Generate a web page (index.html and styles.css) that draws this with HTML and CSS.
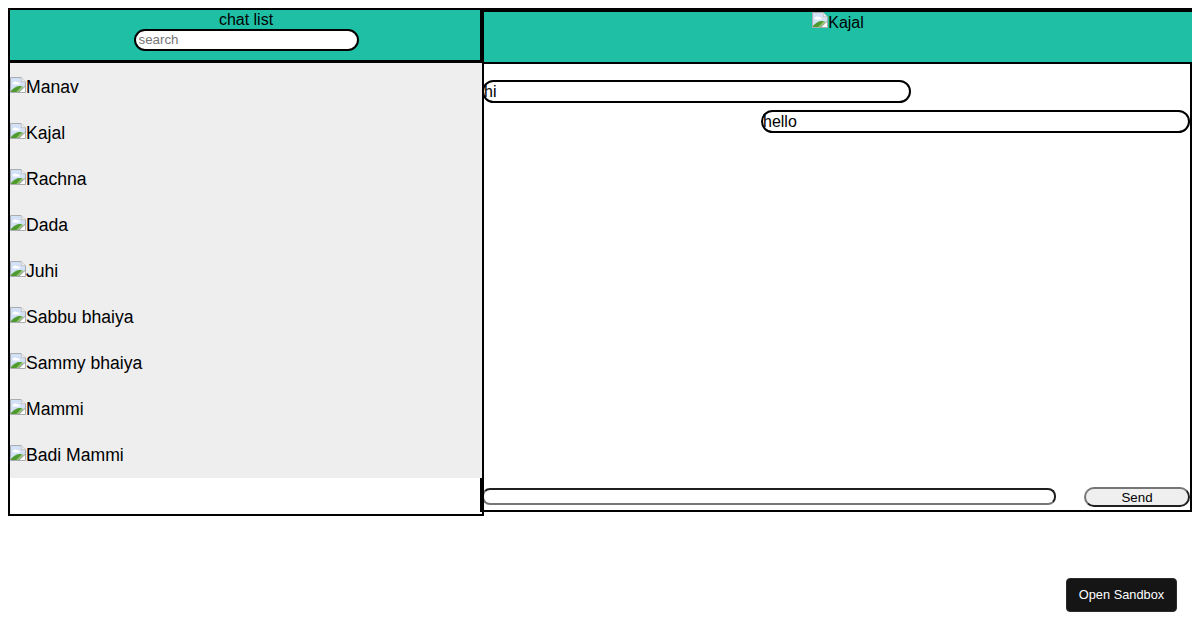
FILE: index.html
```html
<!DOCTYPE html>
<html lang="en">
<head>
<meta charset="utf-8">
<title>Chat</title>
<link rel="stylesheet" href="styles.css">
</head>
<body>
<svg class="defs" width="0" height="0" aria-hidden="true">
  <symbol id="broken" viewBox="0 0 16 16">
    <path d="M0.5 0.5H11L15.5 5V15.5H0.5Z" fill="#fff" stroke="#a9adb0"/>
    <path d="M11 0.5V5H15.5" fill="#eef0f2" stroke="#a9adb0"/>
    <path d="M1 1H10.5V5.5H15V9L8 15H1Z" fill="#d3e1f6"/>
    <path d="M2.5 6.5C3 4.4 6 4 7.2 5.3C9 5 10.2 6.2 9.6 7.4H2.8Z" fill="#fff"/>
    <path d="M1 15V14C3.5 10.5 8 8.2 12 9.2L6.5 15Z" fill="#4f9a2f"/>
    <path d="M6.5 15L12 9.2L13.5 9.8L8.5 15Z" fill="#8cc05c"/>
    <path d="M9 15L15 9.5V15Z" fill="#fff"/>
    <path d="M8.5 15.5L15.5 9" stroke="#8f9396" stroke-width="1" fill="none"/>
  </symbol>
</svg>
<main class="app">
  <aside class="side">
    <header class="side-head">
      <div class="side-title">chat list</div>
      <input class="search" type="text" placeholder="search">
    </header>
    <ul class="list">
      <li class="row"><svg class="broken" width="16" height="16"><use href="#broken"/></svg>Manav</li>
      <li class="row"><svg class="broken" width="16" height="16"><use href="#broken"/></svg>Kajal</li>
      <li class="row"><svg class="broken" width="16" height="16"><use href="#broken"/></svg>Rachna</li>
      <li class="row"><svg class="broken" width="16" height="16"><use href="#broken"/></svg>Dada</li>
      <li class="row"><svg class="broken" width="16" height="16"><use href="#broken"/></svg>Juhi</li>
      <li class="row"><svg class="broken" width="16" height="16"><use href="#broken"/></svg>Sabbu bhaiya</li>
      <li class="row"><svg class="broken" width="16" height="16"><use href="#broken"/></svg>Sammy bhaiya</li>
      <li class="row"><svg class="broken" width="16" height="16"><use href="#broken"/></svg>Mammi</li>
      <li class="row"><svg class="broken" width="16" height="16"><use href="#broken"/></svg>Badi Mammi</li>
    </ul>
  </aside>
  <section class="chat">
    <header class="chat-head"><svg class="broken" width="16" height="16"><use href="#broken"/></svg>Kajal</header>
    <div class="messages">
      <div class="bubble">hi</div>
      <div class="bubble mine">hello</div>
    </div>
    <form class="composer">
      <input class="message-input" type="text">
      <button class="send" type="button">Send</button>
    </form>
  </section>
</main>
<button class="sandbox" type="button">Open Sandbox</button>
</body>
</html>
```

FILE: styles.css
```css
html, body {
  background: #fff;
}
body {
  margin: 8px;
  font-family: "Liberation Sans", Arial, sans-serif;
  font-size: 16px;
  color: #000;
}
.defs {
  position: absolute;
}
.app {
  display: flex;
  align-items: flex-start;
}
.side {
  position: relative;
  flex: 0 0 476px;
  box-sizing: border-box;
  height: 508px;
  border: 2px solid #000;
}
.side-head {
  box-sizing: border-box;
  height: 53px;
  padding-left: 2px;
  background: #1fbfa5;
  border-right: 2px solid #000;
  border-bottom: 3px solid #000;
  text-align: center;
}
.side-title {
  height: 19px;
  line-height: 20px;
}
.search {
  display: block;
  box-sizing: border-box;
  width: 225px;
  height: 22px;
  margin: 0 auto;
  padding: 0 3px 2px;
  border: 2px solid #000;
  border-radius: 11px;
  background: #fff;
  font-family: inherit;
  font-size: 13.33px;
  outline: none;
}
.search::placeholder {
  color: #757575;
}
.list {
  list-style: none;
  margin: 0;
  padding: 1px 0 0;
  height: 415px;
  box-sizing: border-box;
  background: #eee;
}
.row {
  box-sizing: border-box;
  height: 46px;
  padding-top: 13px;
  font-size: 17.6px;
  line-height: 20px;
}
.broken {
  display: inline-block;
  vertical-align: baseline;
}
.chat {
  display: flex;
  flex-direction: column;
  flex: 0 0 712px;
  box-sizing: border-box;
  height: 504px;
  margin-left: -4px;
  border: 2px solid #000;
}
.chat-head {
  flex: none;
  box-sizing: content-box;
  width: 100%;
  height: 50px;
  border: 2px solid #000;
  background: #1fbfa5;
  text-align: center;
  line-height: 18px;
}
.messages {
  flex: 1;
  display: flex;
  flex-direction: column;
  gap: 7px;
  padding-top: 16px;
}
.bubble {
  box-sizing: border-box;
  width: 429px;
  height: 23px;
  border: 2px solid #000;
  border-radius: 12px;
  line-height: 19px;
}
.mine {
  margin-left: auto;
}
.composer {
  display: flex;
  align-items: center;
  justify-content: space-between;
  margin: 0;
  padding-bottom: 3px;
}
.message-input {
  box-sizing: border-box;
  width: 574px;
  height: 17px;
  margin-bottom: 2px;
  padding: 0;
  border: 2px solid;
  border-color: #1f1f1f #1f1f1f #767676 #767676;
  border-radius: 8px;
  background: #fff;
  outline: none;
}
.send {
  box-sizing: border-box;
  width: 106px;
  height: 20px;
  padding: 1px 0 0;
  border: 2px solid;
  border-color: #767676 #1f1f1f #1f1f1f #767676;
  border-radius: 10px;
  background: #efefef;
  color: #000;
  font-family: inherit;
  font-size: 13.33px;
  line-height: 16px;
}
.sandbox {
  position: fixed;
  right: 23px;
  bottom: 18px;
  box-sizing: border-box;
  width: 111px;
  height: 34px;
  padding: 0 0 2px;
  border: 1px solid #2a2a2a;
  border-radius: 4px;
  background: #151515;
  color: #fff;
  font-family: "Liberation Sans", Arial, sans-serif;
  font-size: 12.8px;
}
```
